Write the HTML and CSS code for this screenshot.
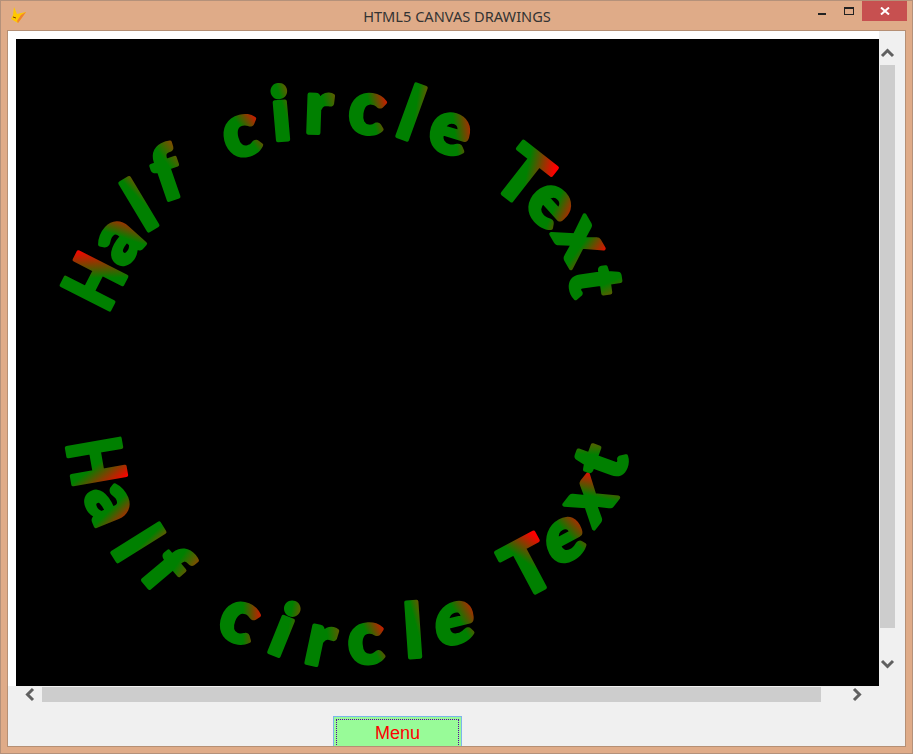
FILE: index.html
```html
<!DOCTYPE html>
<html lang="en">
<head>
  <meta charset="UTF-8" />
  <title>HTML5 CANVAS DRAWINGS</title>
  <link rel="stylesheet" href="styles.css">
</head>
<body>
  <div class="window">
    <div class="titlebar">
      <svg class="app-icon" width="18" height="18" viewBox="0 0 18 18">
        <path d="M4 0 L7 7 L16 5 L11 12 L8 16 L1 12 L3 8 Z" fill="#ffc800"/>
        <path d="M16 5 L11 12 L8 16 L7 14 L11 8 Z" fill="#f08030"/>
        <path d="M3 10 L6 11" stroke="#804000" stroke-width="1" fill="none"/>
      </svg>
      <div class="title">HTML5 CANVAS DRAWINGS</div>
      <div class="controls">
        <span class="ctl-min"></span>
        <span class="ctl-max"></span>
        <span class="ctl-close">
          <svg width="10" height="8" viewBox="0 0 10 8"><path d="M1 0.5 L9 7.5 M9 0.5 L1 7.5" stroke="#fff" stroke-width="2" fill="none"/></svg>
        </span>
      </div>
    </div>

    <div class="content">
      <div class="scroll-row">
        <div class="viewport">
          <svg class="drawing" width="863" height="647" viewBox="16 39 863 647">
            <defs>
              <linearGradient id="letterFill" x1="0" y1="1" x2="1" y2="0">
                <stop offset="0.52" stop-color="#008000"/>
                <stop offset="0.86" stop-color="#ff0000"/>
              </linearGradient>
              <linearGradient id="narrowFill" x1="0" y1="1" x2="1" y2="0">
                <stop offset="0.6" stop-color="#008000"/>
                <stop offset="1" stop-color="#a04000"/>
              </linearGradient>
            </defs>
            <!-- top half -->
            <text class="arc" transform="translate(118 293) rotate(-63) scale(.82 1)">H</text>
            <text class="arc" transform="translate(135 255) rotate(-48)">a</text>
            <text class="arc narrow" transform="translate(153 228) rotate(-31)">l</text>
            <text class="arc narrow" transform="translate(175 198) rotate(-19)">f</text>
            <text class="arc" transform="translate(246 155) rotate(-14)">c</text>
            <text class="arc narrow" transform="translate(283 140) rotate(-5)">i</text>
            <text class="arc narrow" transform="translate(318 133) rotate(2)">r</text>
            <text class="arc" transform="translate(364 133) rotate(8)">c</text>
            <text class="arc narrow" transform="translate(402 138) rotate(20)">l</text>
            <text class="arc" transform="translate(444 152) rotate(17)">e</text>
            <text class="arc" transform="translate(507 197) rotate(38)">T</text>
            <text class="arc" transform="translate(535 219) rotate(48)">e</text>
            <text class="arc" transform="translate(561 251) rotate(60)">x</text>
            <text class="arc narrow" transform="translate(571 285) rotate(82)">t</text>
            <!-- bottom half -->
            <text class="arc" transform="translate(70 466) rotate(80) scale(.82 1)">H</text>
            <text class="arc" transform="translate(90 512) rotate(68)">a</text>
            <text class="arc narrow" transform="translate(115 557) rotate(58)">l</text>
            <text class="arc narrow" transform="translate(147 585) rotate(50)">f</text>
            <text class="arc" transform="translate(231 640) rotate(22)">c</text>
            <text class="arc narrow" transform="translate(274 654) rotate(22)">i</text>
            <text class="arc narrow" transform="translate(316 665) rotate(12)">r</text>
            <text class="arc" transform="translate(367 663) rotate(-3)">c</text>
            <text class="arc narrow" transform="translate(415 657) rotate(-4)">l</text>
            <text class="arc" transform="translate(456 643) rotate(-14) skewX(-10)">e</text>
            <text class="arc" transform="translate(540 590) rotate(-28)">T</text>
            <text class="arc" transform="translate(571 559) rotate(-28) skewX(-10)">e</text>
            <text class="arc" transform="translate(606 513) rotate(-52)">x</text>
            <text class="arc narrow" transform="translate(624 470) rotate(-70)">t</text>
          </svg>
        </div>
        <div class="vbar">
          <svg class="arrow" viewBox="0 0 15 15"><path d="M2 11 L7.5 5.5 L13 11" /></svg>
          <div class="vthumb"></div>
          <svg class="arrow arrow-down" viewBox="0 0 15 15"><path d="M2 4 L7.5 9.5 L13 4" /></svg>
        </div>
      </div>
      <div class="hbar">
        <svg class="arrow" viewBox="0 0 15 15"><path d="M11 2 L5.5 7.5 L11 13" /></svg>
        <div class="hthumb"></div>
        <svg class="arrow arrow-right" viewBox="0 0 15 15"><path d="M4 2 L9.5 7.5 L4 13" /></svg>
      </div>
      <button class="menu-btn">Menu</button>
    </div>
  </div>
</body>
</html>
```

FILE: styles.css
```css
html, body {
  margin: 0;
  height: 100%;
  overflow: hidden;
}

.window {
  box-sizing: border-box;
  width: 913px;
  height: 754px;
  display: flex;
  flex-direction: column;
  padding: 0 6px 6px 6px;
  background-color: #dfab88;
  border: 1px solid #b4917a;
}

.titlebar {
  height: 29px;
  flex: none;
  display: grid;
  grid-template-columns: 1fr auto 1fr;
  margin-right: -1px;
}

.app-icon {
  margin: 6px 0 0 3px;
}

.title {
  font-family: "Noto Sans", sans-serif;
  font-size: 14.6px;
  line-height: 30px;
  color: #333;
}

.controls {
  display: flex;
  justify-content: flex-end;
  align-items: flex-start;
}

.ctl-min {
  width: 8px;
  height: 2px;
  margin: 12px 18px 0 0;
  background-color: #222;
}

.ctl-max {
  box-sizing: border-box;
  width: 10px;
  height: 8px;
  margin: 6px 8px 0 0;
  border: 1px solid #222;
  border-top-width: 2px;
}

.ctl-close {
  width: 45px;
  height: 20px;
  display: flex;
  align-items: center;
  justify-content: center;
  background-color: #c75050;
}

.content {
  flex: 1;
  min-height: 0;
  overflow: hidden;
  background-color: #f0f0f0;
  border: 1px solid #b58f74;
}

.scroll-row {
  display: flex;
  height: 655px;
}

.viewport {
  box-sizing: border-box;
  width: 871px;
  padding: 8px 0 0 8px;
  background-color: #fff;
}

.drawing {
  display: block;
  background-color: #000;
}

.arc {
  font-family: Lato, sans-serif;
  font-weight: 900;
  font-size: 74px;
  text-anchor: middle;
  fill: url(#letterFill);
  stroke: url(#letterFill);
  stroke-width: 4;
  stroke-linejoin: round;
}

.narrow {
  fill: url(#narrowFill);
  stroke: url(#narrowFill);
}

.arrow {
  display: block;
  flex: none;
  width: 15px;
  height: 15px;
}

.arrow path {
  fill: none;
  stroke: #606060;
  stroke-width: 3;
}

.vbar {
  width: 26px;
  padding: 14px 0 0 1px;
  box-sizing: border-box;
}

.vthumb {
  width: 15px;
  height: 563px;
  margin-top: 5px;
  background-color: #cdcdcd;
}

.arrow-down {
  margin-top: 29px;
}

.hbar {
  display: flex;
  height: 15px;
  padding: 1px 0 0 14px;
}

.hthumb {
  width: 779px;
  height: 15px;
  margin-left: 5px;
  background-color: #cdcdcd;
}

.arrow-right {
  margin-left: 29px;
}

.menu-btn {
  display: block;
  box-sizing: border-box;
  width: 129px;
  height: 34px;
  margin: 14px 0 0 325px;
  padding: 0;
  font-family: "Liberation Sans", Arial, sans-serif;
  font-size: 18px;
  color: #f00;
  background-color: #98fb98;
  border: 1px solid #7eb4ea;
  outline: 1px dotted #5a00a0;
  outline-offset: -4px;
}
```
